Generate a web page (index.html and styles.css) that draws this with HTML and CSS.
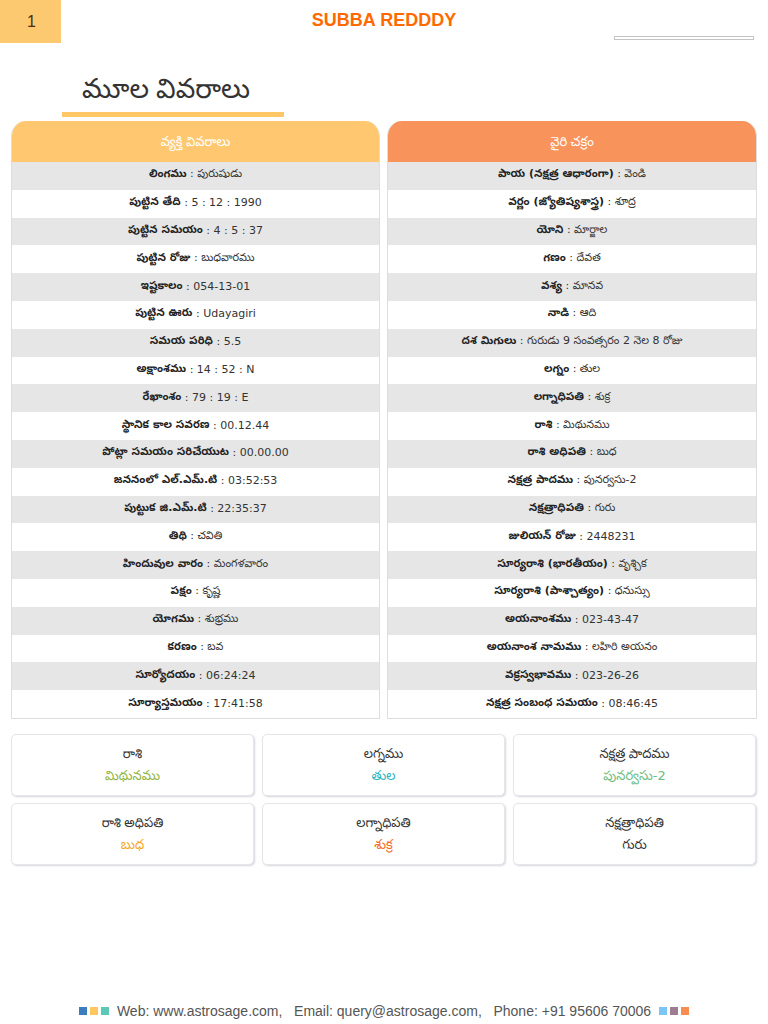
FILE: index.html
```html
<!DOCTYPE html>
<html lang="te">
<head>
<meta charset="utf-8">
<title>SUBBA REDDDY</title>
<link rel="stylesheet" href="styles.css">
</head>
<body>
<header class="top">
  <div class="page-no">1</div>
  <div class="name">SUBBA REDDDY</div>
  <div class="top-right"><span class="top-line"></span></div>
</header>

<section class="heading">
  <h1>మూల వివరాలు</h1>
  <div class="heading-bar"></div>
</section>

<main class="tables">
  <div class="card card-yellow">
    <div class="card-head">వ్యక్తి వివరాలు</div>
    <div class="row"><b>లింగము</b> : పురుషుడు</div>
    <div class="row"><b>పుట్టిన తేది</b> : 5 : 12 : 1990</div>
    <div class="row"><b>పుట్టిన సమయం</b> : 4 : 5 : 37</div>
    <div class="row"><b>పుట్టిన రోజు</b> : బుధవారము</div>
    <div class="row"><b>ఇష్టకాలం</b> : 054-13-01</div>
    <div class="row"><b>పుట్టిన ఊరు</b> : Udayagiri</div>
    <div class="row"><b>సమయ పరిధి</b> : 5.5</div>
    <div class="row"><b>అక్షాంశము</b> : 14 : 52 : N</div>
    <div class="row"><b>రేఖాంశం</b> : 79 : 19 : E</div>
    <div class="row"><b>స్థానిక కాల సవరణ</b> : 00.12.44</div>
    <div class="row"><b>పోట్లా సమయం సరిచేయుట</b> : 00.00.00</div>
    <div class="row"><b>జననంలో ఎల్.ఎమ్.టి</b> : 03:52:53</div>
    <div class="row"><b>పుట్టుక జి.ఎమ్.టి</b> : 22:35:37</div>
    <div class="row"><b>తిథి</b> : చవితి</div>
    <div class="row"><b>హిందువుల వారం</b> : మంగళవారం</div>
    <div class="row"><b>పక్షం</b> : కృష్ణ</div>
    <div class="row"><b>యోగము</b> : శుభ్రము</div>
    <div class="row"><b>కరణం</b> : బవ</div>
    <div class="row"><b>సూర్యోదయం</b> : 06:24:24</div>
    <div class="row"><b>సూర్యాస్తమయం</b> : 17:41:58</div>
  </div>

  <div class="card card-orange">
    <div class="card-head">వైరి చక్రం</div>
    <div class="row"><b>పాయ (నక్షత్ర ఆధారంగా)</b> : వెండి</div>
    <div class="row"><b>వర్ణం (జ్యోతిష్యశాస్త్ర)</b> : శూద్ర</div>
    <div class="row"><b>యోని</b> : మార్జాల</div>
    <div class="row"><b>గణం</b> : దేవత</div>
    <div class="row"><b>వశ్య</b> : మానవ</div>
    <div class="row"><b>నాడి</b> : ఆది</div>
    <div class="row"><b>దశ మిగులు</b> : గురుడు 9 సంవత్సరం 2 నెల 8 రోజు</div>
    <div class="row"><b>లగ్నం</b> : తుల</div>
    <div class="row"><b>లగ్నాధిపతి</b> : శుక్ర</div>
    <div class="row"><b>రాశి</b> : మిథునము</div>
    <div class="row"><b>రాశి అధిపతి</b> : బుధ</div>
    <div class="row"><b>నక్షత్ర పాదము</b> : పునర్వసు-2</div>
    <div class="row"><b>నక్షత్రాధిపతి</b> : గురు</div>
    <div class="row"><b>జులియన్ రోజు</b> : 2448231</div>
    <div class="row"><b>సూర్యరాశి (భారతీయం)</b> : వృశ్చిక</div>
    <div class="row"><b>సూర్యరాశి (పాశ్చాత్యం)</b> : ధనుస్సు</div>
    <div class="row"><b>అయనాంశము</b> : 023-43-47</div>
    <div class="row"><b>అయనాంశ నామము</b> : లహిరి అయనం</div>
    <div class="row"><b>వక్రస్వభావము</b> : 023-26-26</div>
    <div class="row"><b>నక్షత్ర సంబంధ సమయం</b> : 08:46:45</div>
  </div>
</main>

<section class="summary">
  <div class="tile"><div class="tile-label">రాశి</div><div class="tile-value v-green">మిథునము</div></div>
  <div class="tile"><div class="tile-label">లగ్నము</div><div class="tile-value v-teal">తుల</div></div>
  <div class="tile"><div class="tile-label">నక్షత్ర పాదము</div><div class="tile-value v-mint">పునర్వసు-2</div></div>
  <div class="tile"><div class="tile-label">రాశి అధిపతి</div><div class="tile-value v-amber">బుధ</div></div>
  <div class="tile"><div class="tile-label">లగ్నాధిపతి</div><div class="tile-value v-red">శుక్ర</div></div>
  <div class="tile"><div class="tile-label">నక్షత్రాధిపతి</div><div class="tile-value v-dark">గురు</div></div>
</section>

<footer class="foot">
  <span class="sq sq-blue"></span><span class="sq sq-yellow"></span><span class="sq sq-teal"></span>
  <span class="foot-text">Web: www.astrosage.com,&nbsp;&nbsp; Email: query@astrosage.com,&nbsp;&nbsp; Phone: +91 95606 70006</span>
  <span class="sq sq-sky"></span><span class="sq sq-mauve"></span><span class="sq sq-orange"></span>
</footer>
</body>
</html>
```

FILE: styles.css
```css
* { box-sizing: border-box; }

html, body {
  margin: 0;
  padding: 0;
  background: #ffffff;
}

body {
  width: 768px;
  height: 1024px;
  position: relative;
  font-family: "Noto Sans", "Noto Sans Telugu", "DejaVu Sans", sans-serif;
  color: #333333;
}

/* header */
.top {
  display: grid;
  grid-template-columns: 1fr auto 1fr;
  height: 43px;
}

.page-no {
  width: 61px;
  height: 43px;
  background: #fcc870;
  color: #4a3010;
  font-family: "Liberation Sans", Arial, sans-serif;
  font-size: 16px;
  display: flex;
  align-items: center;
  justify-content: center;
  padding-left: 2px;
}

.name {
  align-self: start;
  padding-top: 10px;
  color: #ff6a00;
  font-family: "Liberation Sans", Arial, sans-serif;
  font-weight: bold;
  font-size: 18px;
  letter-spacing: 0;
}

.top-right {
  display: flex;
  justify-content: flex-end;
  align-items: flex-end;
  padding: 0 14px 3px 0;
}

.top-line {
  display: block;
  width: 140px;
  height: 4px;
  border: 1px solid #c4c4c4;
}

/* heading */
.heading {
  padding-top: 25px;
}

.heading h1 {
  margin: 0 0 0 82px;
  font-size: 27.5px;
  font-weight: normal;
  line-height: 40px;
  color: #333333;
}

.heading-bar {
  margin: 4px 0 0 62px;
  width: 222px;
  height: 5px;
  background: #ffc766;
}

/* tables */
.tables {
  display: grid;
  grid-template-columns: 369px 370px;
  gap: 7px;
  padding: 4px 0 0 11px;
}

.card {
  border: 1px solid #dedede;
  border-top: none;
  border-radius: 15px 15px 0 0;
  overflow: hidden;
}

.card-head {
  height: 41px;
  display: flex;
  align-items: center;
  justify-content: center;
  color: #ffffff;
  font-size: 13px;
  margin: 0 -1px;
}

.card-yellow .card-head { background: #ffc870; }
.card-orange .card-head { background: #f7935b; }

.row {
  height: 27.8px;
  display: flex;
  align-items: center;
  justify-content: center;
  font-family: "DejaVu Sans", "Noto Sans Telugu", "Noto Sans", sans-serif;
  font-size: 11px;
  color: #333333;
  white-space: pre;
  padding-bottom: 2px;
}

.row:nth-child(even) { background: #e6e6e6; }
.row:nth-child(odd) { background: #ffffff; }

.row b {
  font-weight: bold;
  color: #222222;
}

/* summary tiles */
.summary {
  display: grid;
  grid-template-columns: repeat(3, 243px);
  grid-auto-rows: 62px;
  column-gap: 8px;
  row-gap: 7px;
  padding: 15px 0 0 11px;
}

.tile {
  background: #ffffff;
  border: 1px solid #e6e6e6;
  border-radius: 5px;
  box-shadow: 1px 1px 2px rgba(160, 165, 190, 0.45);
  display: flex;
  flex-direction: column;
  align-items: center;
  padding-top: 9px;
  gap: 5px;
}

.tile-label {
  font-size: 13px;
  color: #333333;
  line-height: 18px;
}

.tile-value {
  font-family: "DejaVu Sans", "Noto Sans Telugu", "Noto Sans", sans-serif;
  font-size: 13px;
  line-height: 18px;
}

.v-green { color: #8db33a; }
.v-teal { color: #2bb3c0; }
.v-mint { color: #6bbd80; }
.v-amber { color: #f5a623; }
.v-red { color: #f26b1d; }
.v-dark { color: #333333; }

/* footer */
.foot {
  position: absolute;
  left: 0;
  right: 0;
  top: 1002px;
  display: flex;
  align-items: center;
  justify-content: center;
  gap: 3px;
  font-family: "Liberation Sans", Arial, sans-serif;
  font-size: 14px;
  color: #555555;
  height: 18px;
}

.foot-text {
  margin: 0 5px;
}

.sq {
  display: inline-block;
  width: 8px;
  height: 8px;
}

.sq-blue { background: #3c7dbf; }
.sq-yellow { background: #ffc75f; }
.sq-teal { background: #5cc9b5; }
.sq-sky { background: #7cc6f5; }
.sq-mauve { background: #9e7d92; }
.sq-orange { background: #f78d4e; }
```
